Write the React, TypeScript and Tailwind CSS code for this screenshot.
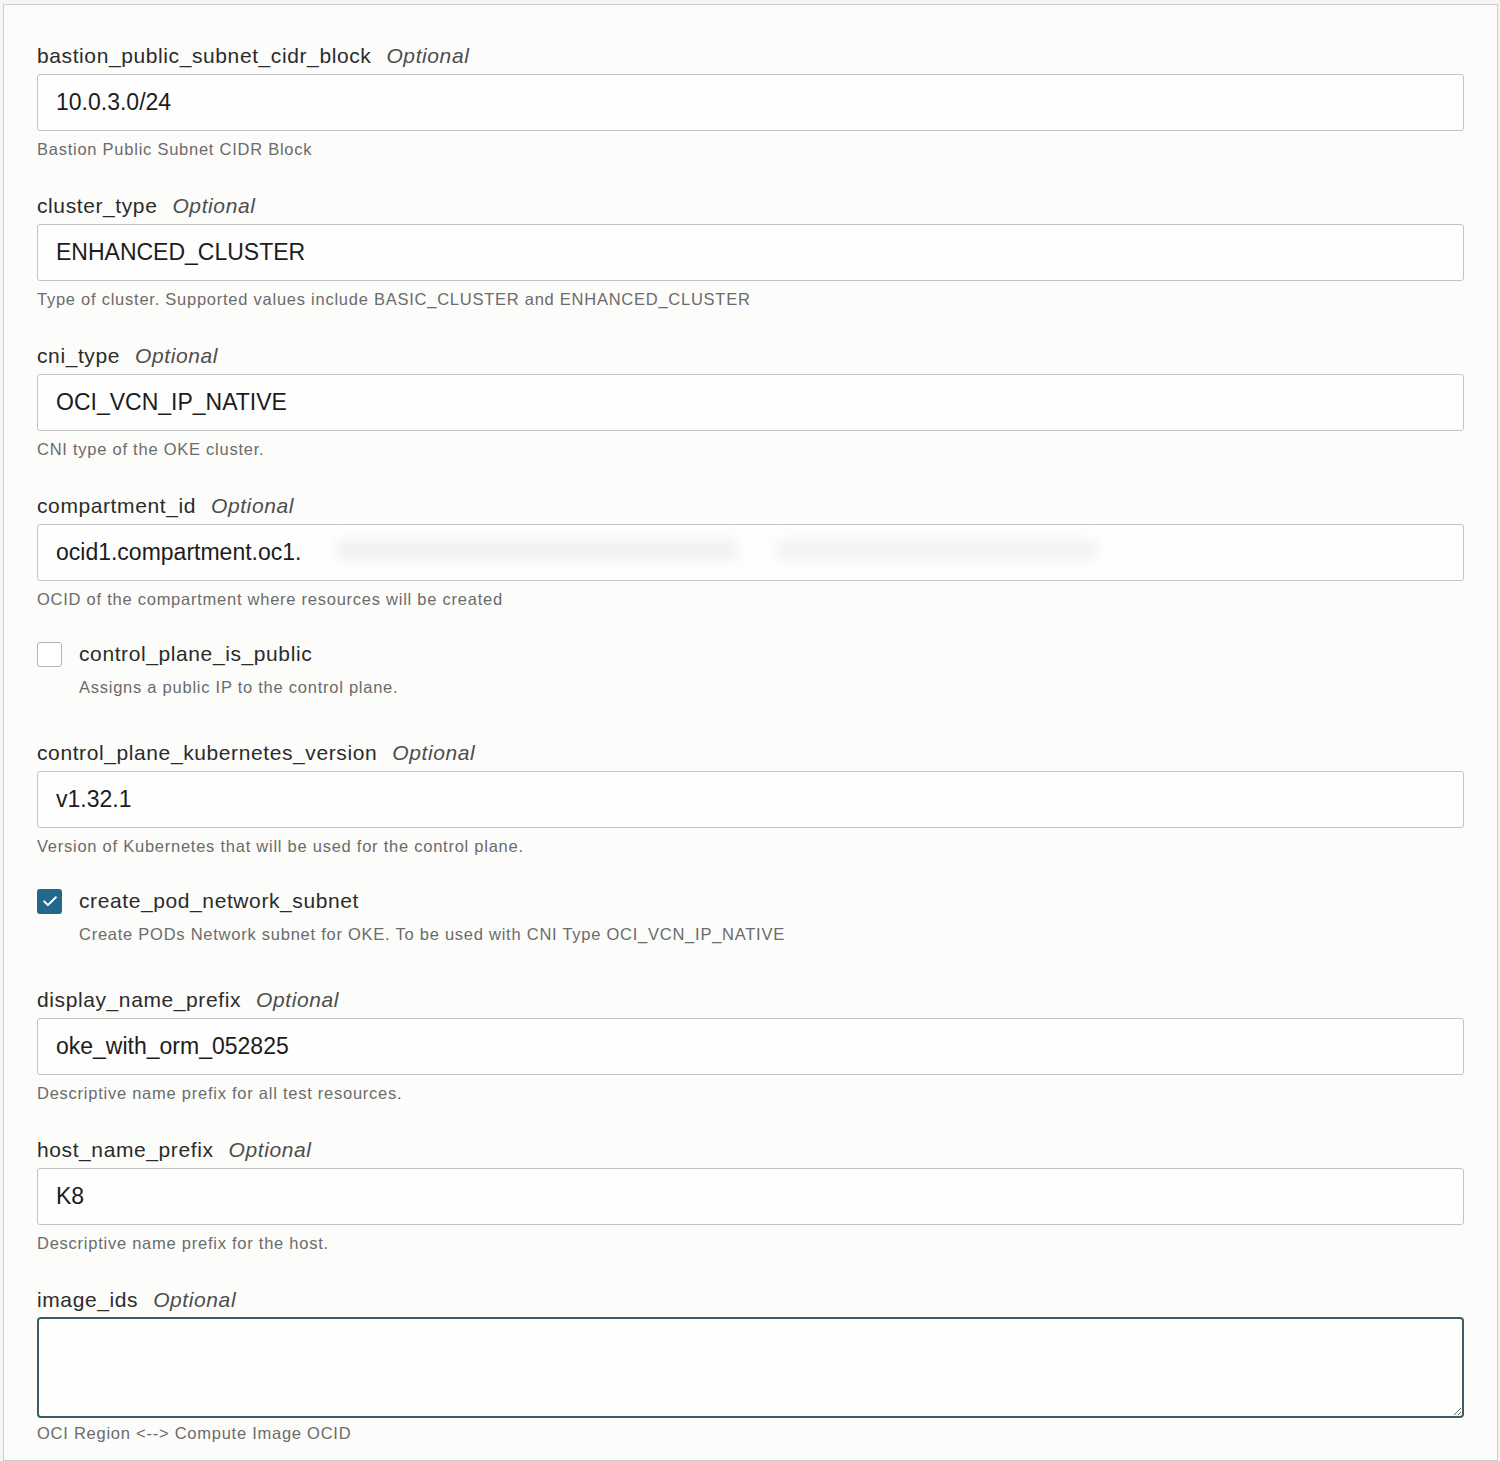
import type { ReactNode } from "react"

const font = { fontFamily: '"Liberation Sans", Arial, sans-serif' }

function Label({ name, optional = true }: { name: string; optional?: boolean }) {
  return (
    <div className="flex h-[37px] items-center gap-[15px] text-[21px] tracking-[0.6px]">
      <span className="text-[#2b2b2b]">{name}</span>
      {optional && <span className="italic text-[#4d4d4d]">Optional</span>}
    </div>
  )
}

function Help({ children }: { children: ReactNode }) {
  return (
    <div className="flex h-[35px] items-center text-[16.5px] tracking-[0.75px] text-[#6b6b6b]">
      {children}
    </div>
  )
}

function TextField({
  name,
  value,
  help,
  redacted = false,
}: {
  name: string
  value: string
  help: string
  redacted?: boolean
}) {
  return (
    <div className="mb-[20px]">
      <Label name={name} />
      <div className="relative">
        <input
          readOnly
          value={value}
          className="block h-[57px] w-full rounded-[3px] border border-[#c3c3c3] bg-[#fefefe] px-[18px] text-[23px] text-[#1c1c1c] outline-none"
        />
        {/* redacted ocid, blurred out in the original */}
        {redacted && (
          <div className="pointer-events-none absolute left-[300px] top-[16px] flex gap-10 blur-[6px]">
            <span className="h-[20px] w-[400px] rounded bg-[#f1f1ef]" />
            <span className="h-[20px] w-[320px] rounded bg-[#f3f3f1]" />
          </div>
        )}
      </div>
      <div className="h-[1px]" />
      <Help>{help}</Help>
    </div>
  )
}

function CheckField({ name, checked, help }: { name: string; checked: boolean; help: string }) {
  return (
    <div className="mb-[20px] h-[77px]">
      <div className="flex h-[34px] items-center gap-[17px]">
        {checked ? (
          <span className="flex h-[25px] w-[25px] items-center justify-center rounded-[3px] bg-[#22688a]">
            <svg viewBox="0 0 24 24" className="h-[20px] w-[20px]" fill="none" stroke="white" strokeWidth="2.4" strokeLinecap="round" strokeLinejoin="round">
              <path d="M5 12.5l4.5 4.5L19 7.5" />
            </svg>
          </span>
        ) : (
          <span className="h-[25px] w-[25px] rounded-[3px] border border-[#b4b4b4] bg-white" />
        )}
        <span className="text-[21px] tracking-[0.6px] text-[#2b2b2b]">{name}</span>
      </div>
      <div className="flex h-[32px] items-center pl-[42px] text-[16.5px] tracking-[0.75px] text-[#6b6b6b]">
        {help}
      </div>
    </div>
  )
}

export default function App() {
  return (
    <div className="min-h-[1461px] bg-[#f5f5f5] pl-[3px] pt-[4px]" style={font}>
      <div className="w-[1495px] min-h-[1457px] border border-[#cdcdcd] bg-[#fcfcfa] px-[33px] pt-[32px]">
        <TextField
          name="bastion_public_subnet_cidr_block"
          value="10.0.3.0/24"
          help="Bastion Public Subnet CIDR Block"
        />
        <TextField
          name="cluster_type"
          value="ENHANCED_CLUSTER"
          help="Type of cluster. Supported values include BASIC_CLUSTER and ENHANCED_CLUSTER"
        />
        <TextField name="cni_type" value="OCI_VCN_IP_NATIVE" help="CNI type of the OKE cluster." />
        <TextField
          name="compartment_id"
          value="ocid1.compartment.oc1."
          help="OCID of the compartment where resources will be created"
          redacted
        />
        <CheckField
          name="control_plane_is_public"
          checked={false}
          help="Assigns a public IP to the control plane."
        />
        <TextField
          name="control_plane_kubernetes_version"
          value="v1.32.1"
          help="Version of Kubernetes that will be used for the control plane."
        />
        <CheckField
          name="create_pod_network_subnet"
          checked
          help="Create PODs Network subnet for OKE. To be used with CNI Type OCI_VCN_IP_NATIVE"
        />
        <TextField
          name="display_name_prefix"
          value="oke_with_orm_052825"
          help="Descriptive name prefix for all test resources."
        />
        <TextField name="host_name_prefix" value="K8" help="Descriptive name prefix for the host." />
        <div>
          <Label name="image_ids" />
          <textarea
            className="-mt-[1px] block h-[101px] w-full resize-y rounded-[4px] border-2 border-[#3e5b68] bg-[#fefefe] px-[18px] py-3 text-[23px] outline-none"
            defaultValue=""
          />
          <div className="-mt-[2px]">
            <Help>OCI Region &lt;--&gt; Compute Image OCID</Help>
          </div>
        </div>
      </div>
    </div>
  )
}
